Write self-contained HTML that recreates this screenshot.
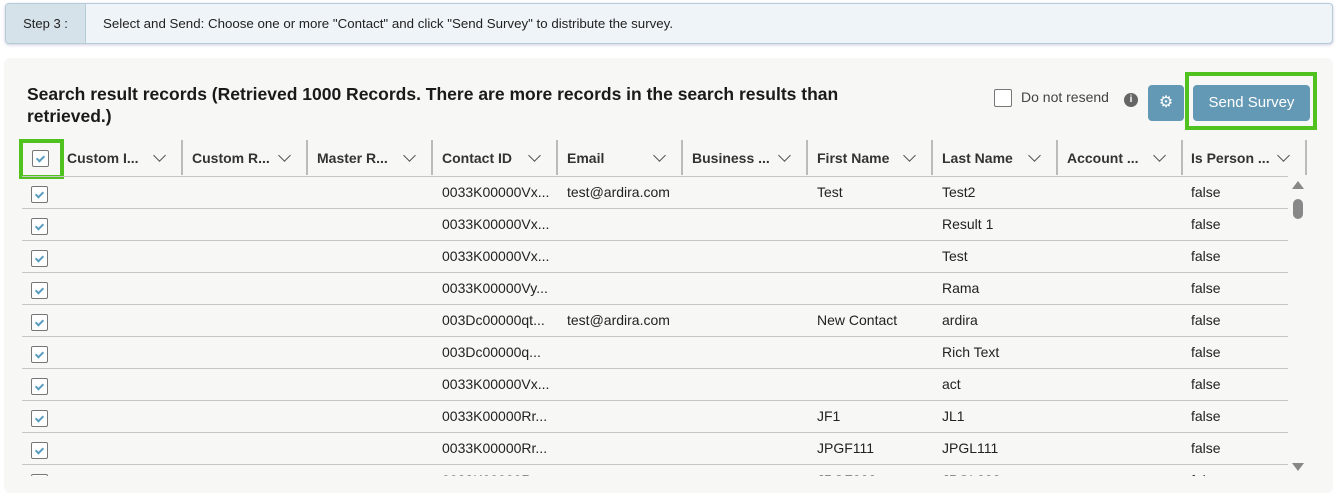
<!DOCTYPE html><html><head><style>
body{margin:0;width:1337px;height:497px;background:#fff;font-family:"Liberation Sans",sans-serif;color:#222;overflow:hidden;position:relative}
.step{position:absolute;left:5px;top:3px;width:1326px;height:39px;border:1px solid #b6cad8;border-radius:4px;background:#eef4f8;box-shadow:0 1px 3px #ccd;overflow:hidden}
.step .l{position:absolute;left:0;top:0;width:79px;height:39px;background:#d5e2ea;border-right:1px solid #b6cad8;font-size:13px;line-height:39px;text-align:center;color:#222}
.step .r{position:absolute;left:97px;top:0;font-size:13.3px;line-height:39px}
.panel{position:absolute;left:4px;top:58px;width:1329px;height:435px;background:#f7f7f6;border-radius:6px}
.title{position:absolute;left:27px;top:83px;width:830px;font-weight:bold;font-size:17.5px;line-height:22px;color:#1a1a1a}
.cb{position:absolute;width:15px;height:15px;border:1px solid #777;border-radius:2px;background:#fff}
.cb.c:after{content:"";position:absolute;left:5px;top:3px;width:3px;height:6px;border:solid #5b9ec0;border-width:0 2px 2px 0;transform:rotate(45deg)}
.hdr{position:absolute;top:140px;height:36px;font-weight:bold;font-size:14px;color:#333;line-height:36px}
.chev{position:absolute;width:8px;height:8px;border:solid #555;border-width:0 1.5px 1.5px 0;transform:rotate(45deg)}
.div{position:absolute;top:140px;width:2px;height:35px;background:#bbb}
.line{position:absolute;left:22px;width:1266px;height:1px;background:#c6c6c6}
.cell{position:absolute;font-size:14px;color:#222}
.green{position:absolute;border:4px solid #4fc21f}
</style></head><body>
<div class="step"><div class="l">Step 3 :</div><div class="r">Select and Send: Choose one or more "Contact" and click "Send Survey" to distribute the survey.</div></div>
<div class="panel"></div>
<div class="title">Search result records (Retrieved 1000 Records. There are more records in the search results than retrieved.)</div>
<div class="cb" style="left:994px;top:89px;width:16px;height:16px"></div>
<div style="position:absolute;left:1021px;top:89px;font-size:14px;color:#444">Do not resend</div>
<div style="position:absolute;left:1124px;top:93px;width:14px;height:14px;border-radius:50%;background:#666;color:#fff;font-size:10px;font-weight:bold;text-align:center;line-height:14px">i</div>
<div style="position:absolute;left:1148px;top:85px;width:36px;height:36px;background:#6399b4;border-radius:4px;color:#fff;font-size:16px;text-align:center;line-height:36px">⚙</div>
<div class="green" style="left:1185px;top:72px;width:124px;height:50px"></div>
<div style="position:absolute;left:1193px;top:85px;width:117px;height:36px;background:#6399b4;border-radius:4px;color:#fff;font-size:15px;text-align:center;line-height:36px">Send Survey</div>
<div class="green" style="left:19px;top:139px;width:37px;height:32px"></div>
<div class="cb c" style="left:32px;top:150px"></div>
<div id="t"></div>
<div style="position:absolute;left:1292px;top:181px;width:0;height:0;border-left:6px solid transparent;border-right:6px solid transparent;border-bottom:8px solid #888"></div>
<div style="position:absolute;left:1293px;top:199px;width:10px;height:20px;border-radius:5px;background:#888"></div>
<div style="position:absolute;left:1292px;top:463px;width:0;height:0;border-left:6px solid transparent;border-right:6px solid transparent;border-top:8px solid #888"></div>
<script>
var h=["Custom I...","Custom R...","Master R...","Contact ID","Email","Business ...","First Name","Last Name","Account ...","Is Person ..."],s="";
var xs=[67,192,317,442,567,692,817,942,1067,1191];
h.forEach(function(t,i){s+='<div class="hdr" style="left:'+xs[i]+'px">'+t+'</div><div class="chev" style="left:'+(xs[i]+88)+'px;top:151px"></div><div class="div" style="left:'+(xs[i]+114)+'px"></div>';});
s+='<div class="line" style="top:176px"></div>';
var r=[["0033K00000Vx...","test@ardira.com","Test","Test2"],["0033K00000Vx...","","","Result 1"],["0033K00000Vx...","","","Test"],["0033K00000Vy...","","","Rama"],["003Dc00000qt...","test@ardira.com","New Contact","ardira"],["003Dc00000q...","","","Rich Text"],["0033K00000Vx...","","","act"],["0033K00000Rr...","","JF1","JL1"],["0033K00000Rr...","","JPGF111","JPGL111"],["0033K00000R...","","JPGF222","JPGL222"]];
r.forEach(function(d,i){var y=177+i*32;
s+='<div style="position:absolute;left:0;top:0;width:1290px;height:476px;overflow:hidden"><div class="cb c" style="left:31px;top:'+(y+9)+'px"></div>';
[[442,d[0]],[567,d[1]],[817,d[2]],[942,d[3]],[1191,"false"]].forEach(function(c){s+='<div class="cell" style="left:'+c[0]+'px;top:'+(y+7)+'px">'+c[1]+'</div>';});
s+='</div>';if(i<9)s+='<div class="line" style="top:'+(y+31)+'px"></div>';});
document.getElementById('t').innerHTML=s;
</script>
</body></html>
